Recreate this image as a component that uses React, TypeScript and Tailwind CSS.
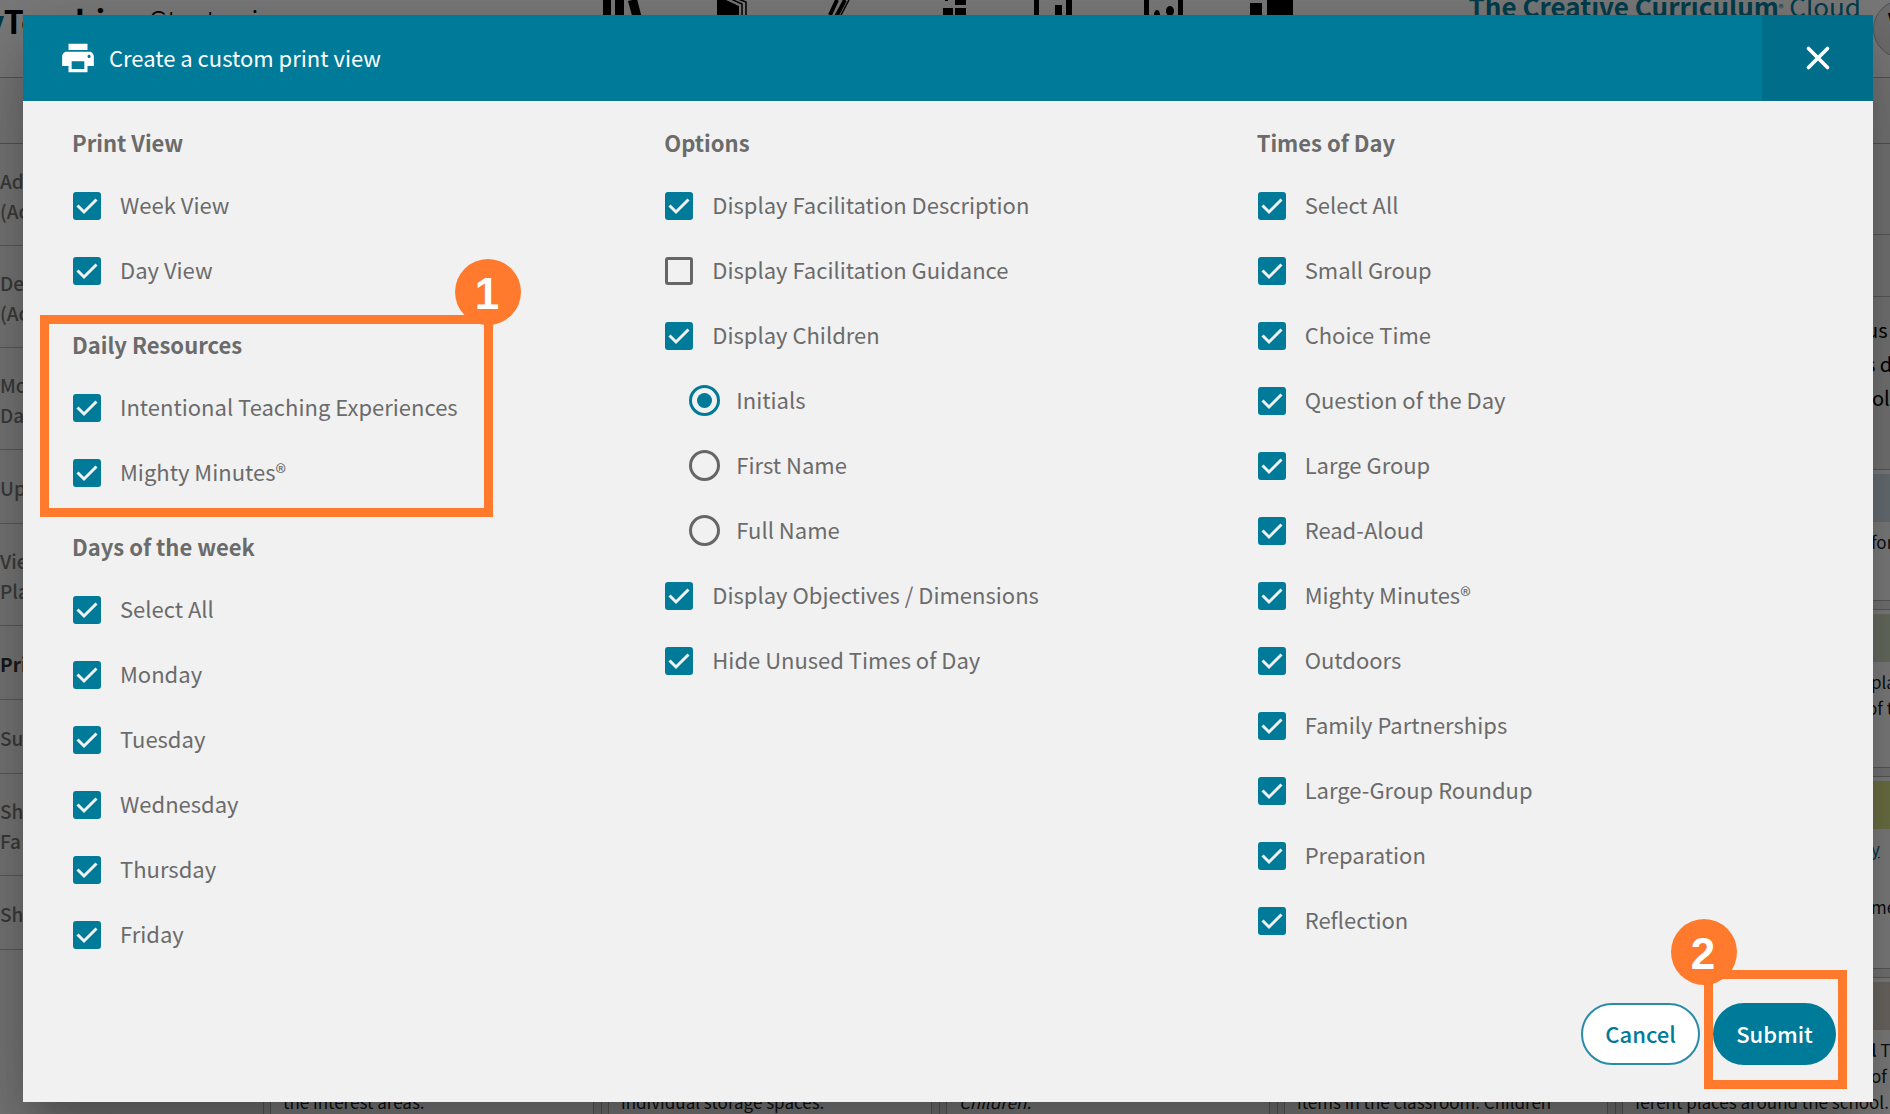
import { useState, type ReactNode } from 'react'
import { MdPrint } from 'react-icons/md'
import { X } from 'lucide-react'

const sidebarItems = [
  { lines: ['Ad', '(Ac'] },
  { lines: ['De', '(Ac'] },
  { lines: ['Mo', 'Da'] },
  { lines: ['Up'] },
  { lines: ['Vie', 'Pla'] },
  { lines: ['Pri'], active: true },
  { lines: ['Su'] },
  { lines: ['Sh', 'Fa'] },
  { lines: ['Sh'] },
]

const days = ['Select All', 'Monday', 'Tuesday', 'Wednesday', 'Thursday', 'Friday']

const times = [
  'Select All',
  'Small Group',
  'Choice Time',
  'Question of the Day',
  'Large Group',
  'Read-Aloud',
  'Mighty Minutes®',
  'Outdoors',
  'Family Partnerships',
  'Large-Group Roundup',
  'Preparation',
  'Reflection',
]

const weekNotes = ['the interest areas.', 'individual storage spaces.', 'Children.', 'items in the classroom. Children']

function Check({ label, defaultChecked = true }: { label: string; defaultChecked?: boolean }) {
  return (
    <label className="flex h-[65px] items-center gap-[19px] pl-px">
      <span className="relative block size-7">
        <input
          type="checkbox"
          defaultChecked={defaultChecked}
          className="peer block size-7 appearance-none rounded-[3px] border-[3px] border-[#666666] checked:border-[#007a99] checked:bg-[#007a99]"
        />
        <svg viewBox="0 0 28 28" className="pointer-events-none absolute inset-0 hidden size-7 peer-checked:block" fill="none">
          <path d="M4.500 13.500 11 20 23.500 7.500" stroke="#f1f1f1" strokeWidth="3" />
        </svg>
      </span>
      <span className="pb-[3px] whitespace-nowrap">{label}</span>
    </label>
  )
}

function Radio({ label, checked, onChange }: { label: string; checked: boolean; onChange: () => void }) {
  return (
    <label className="flex h-[65px] items-center gap-4 pl-[25px]">
      <span className="relative flex size-[31px] items-center justify-center">
        <input
          type="radio"
          name="child-name"
          checked={checked}
          onChange={onChange}
          className="peer block size-[31px] appearance-none rounded-full border-[3px] border-[#666666] checked:border-[#007a99]"
        />
        <span className="pointer-events-none absolute hidden size-[15px] rounded-full bg-[#007a99] peer-checked:block" />
      </span>
      <span className="pb-[3px] whitespace-nowrap">{label}</span>
    </label>
  )
}

function Section({ title, children }: { title: string; children: ReactNode }) {
  return (
    <section className="relative pb-px">
      <h2 className="h-[71px] pt-7 leading-6 font-bold">{title}</h2>
      {children}
    </section>
  )
}

function Badge({ n, className }: { n: number; className: string }) {
  return (
    <span
      className={`absolute flex size-[66px] items-center justify-center rounded-full bg-[#ff7a2c] pt-1 pr-0.5 font-['Liberation_Sans',sans-serif] text-[44px] leading-none font-bold text-white ${className}`}
    >
      {n}
    </span>
  )
}

function NavIcon({ children }: { children: ReactNode }) {
  return (
    <svg viewBox="0 0 40 30" className="h-[30px] w-10 overflow-visible" fill="black">
      {children}
    </svg>
  )
}

function NavIcons() {
  return (
    <nav className="flex gap-[68px]">
      <NavIcon>
        <path d="M1 0h8v30H1zM13 0h9v30h-9zM26 1l9-2 8 31h-9z" />
      </NavIcon>
      <NavIcon>
        <path d="M7 0h9l13 6v24H7z" />
        <path d="M21 -1l11 5v26M28 -1l8 3v28" fill="none" stroke="black" strokeWidth="1.5" />
      </NavIcon>
      <NavIcon>
        <path d="M19 0 12 15M27 0 18 17" stroke="black" strokeWidth="4" />
        <path d="M31 0 22 17" stroke="black" strokeWidth="1.5" />
      </NavIcon>
      <NavIcon>
        <path d="M29 0h11v5H29zM17 8h10v22H17zM29 8h11v22H29zM19 0h3v1h-3z" />
      </NavIcon>
      <NavIcon>
        <path d="M0 0h5v30H0zM11 18h6v12h-6zM21 5h7v25h-7zM32 0h6v30h-6z" />
      </NavIcon>
      <NavIcon>
        <path d="M2 0h5v30H2zM36 0h5v30h-5z" />
        <ellipse cx="15" cy="15" rx="3" ry="5" />
        <ellipse cx="28" cy="11" rx="4" ry="5" />
        <path d="M23 20h10v4H23z" />
      </NavIcon>
      <NavIcon>
        <path d="M0 3h12v27H0zM17 0h26v18h-6l-2 4h-4l-2-4H17z" />
      </NavIcon>
    </nav>
  )
}

function Card({ className, bar, children }: { className: string; bar: string; children?: ReactNode }) {
  return (
    <div className={`border border-[#b5b5b5] bg-white p-1 ${className}`}>
      <div className={`mb-[7px] h-12 ${bar}`} />
      {children}
    </div>
  )
}

function WeekPlan() {
  return (
    <div className="flex w-[1690px] shrink-0 flex-col text-[17px] leading-[26px] whitespace-pre text-[#222222]">
      <div className="h-[91px] border-b border-[#b5b5b5]" />
      <div className="h-[62px] border-b border-[#b5b5b5]" />
      <div className="h-[172px] pt-4 pl-[1603px] text-[20px] leading-[34px] text-black">
        <p>us</p>
        <p>s d</p>
        <p className="pl-1.5">ol</p>
      </div>
      <div className="grid grid-cols-5">
        {weekNotes.map((note) => (
          <div key={note} className="flex flex-col gap-2 border-l border-[#b5b5b5] pr-[7px] pl-1.5">
            <Card className="h-[132px]" bar="bg-[#d5e3ec]" />
            <Card className="h-[159px]" bar="bg-[#d5dfc6]" />
            <Card className="h-[193px]" bar="bg-[#dfe68a]" />
            <Card className="h-[150px]" bar="bg-[#ddd2c8]">
              <p className={`pt-[52px] pl-2 ${note === 'Children.' ? 'italic' : ''}`}>{note}</p>
            </Card>
          </div>
        ))}
        <div className="flex flex-col gap-2 border-l border-[#b5b5b5] pr-[7px] pl-1.5">
          <Card className="h-[132px]" bar="bg-[#d5e3ec]">
            <p className="pl-[244px]">for</p>
          </Card>
          <Card className="h-[159px]" bar="bg-[#d5dfc6]">
            <p className="pl-[244px]">pla</p>
            <p className="pl-60">of t</p>
          </Card>
          <Card className="h-[193px]" bar="bg-[#dfe68a]">
            <a href="#plan" className="ml-[244px] block text-[#007a99] underline">
              y
            </a>
            <p className="pt-8 pl-[244px]">me</p>
          </Card>
          <Card className="h-[150px]" bar="bg-[#ddd2c8]">
            <p className="pl-[244px]">
              <b>l</b> T
            </p>
            <p className="pl-[244px]">of</p>
            <p className="pl-2">ferent places around the school.</p>
          </Card>
        </div>
      </div>
    </div>
  )
}

function PlannerPage() {
  return (
    <div className="absolute inset-0 overflow-hidden bg-[#ececec]" aria-hidden="true">
      <header className="flex h-[78px] justify-between border-b border-[#a8a8a8] bg-[#f4f4f4]">
        <div className="w-[602px] text-[32px] leading-10 whitespace-nowrap text-black">
          <span className="-ml-3.5 font-bold text-[#007a99]">y</span>
          <span className="font-bold">Teaching</span>
          <span className="pl-1 font-light">Strategies</span>
          <sup className="text-[10px]">™</sup>
        </div>
        <NavIcons />
        <div className="flex flex-1 justify-end">
          <div className="-mt-2.5 mr-3 text-[26px] leading-8 whitespace-nowrap text-[#007a99]">
            <span className="font-bold">The Creative Curriculum</span>
            <sup className="text-[10px]">®</sup> Cloud
          </div>
          <div className="-mr-[41px] h-[58px] w-[58px] rounded-full border border-[#a8a8a8] bg-[#dddddd] pt-1 pl-3.5 text-[20px] font-bold">
            V
          </div>
        </div>
      </header>
      <div className="h-[66px] border-b border-[#a8a8a8]" />
      <div className="flex">
        <ul className="w-[263px] shrink-0 text-[19px] leading-[30px] font-medium text-[#777777]">
          {sidebarItems.map((item, i) => (
            <li
              key={i}
              className={`flex flex-col justify-center border-b border-[#b5b5b5] pt-0.5 ${item.lines.length > 1 ? 'h-[102px]' : 'h-[74px]'} ${item.active ? 'font-bold text-[#333333]' : ''}`}
            >
              {item.lines.map((line) => (
                <span key={line}>{line}</span>
              ))}
            </li>
          ))}
        </ul>
        <WeekPlan />
      </div>
    </div>
  )
}

export default function App() {
  const [nameMode, setNameMode] = useState('Initials')

  return (
    <div className="relative min-h-screen overflow-hidden font-['Noto_Sans_CJK_SC','Noto_Sans',sans-serif]">
      <PlannerPage />
      <div className="relative min-h-screen bg-black/50 pt-[15px] pr-[17px] pb-3 pl-[23px]">
        <div
          role="dialog"
          aria-labelledby="dialog-title"
          className="bg-[#f1f1f1] text-[22px] leading-8 text-[#6b6b6b] shadow-[0_22px_30px_-14px_rgba(0,0,0,0.2),0_48px_76px_6px_rgba(0,0,0,0.14),0_18px_92px_16px_rgba(0,0,0,0.12)]"
        >
          <header className="flex h-[87px] items-stretch justify-between border-b border-white bg-[#007a99] text-white">
            <div className="flex items-center gap-3 pl-9">
              <MdPrint size={38} />
              <h1 id="dialog-title" className="pb-[3px]">
                Create a custom print view
              </h1>
            </div>
            <button type="button" aria-label="Close" className="flex w-[111px] items-center justify-center bg-[#006e8a]">
              <X size={38} strokeWidth={2.3} />
            </button>
          </header>

          <div className="grid grid-cols-3 pr-6 pl-[49px]">
            <div>
              <Section title="Print View">
                <Check label="Week View" />
                <Check label="Day View" />
              </Section>
              <Section title="Daily Resources">
                <Check label="Intentional Teaching Experiences" />
                <Check label="Mighty Minutes®" />
                <div className="pointer-events-none absolute top-[11px] -left-8 h-[202px] w-[453px] border-[9px] border-[#ff7a2c]">
                  <Badge n={1} className="-top-[65px] -right-[37px]" />
                </div>
              </Section>
              <Section title="Days of the week">
                {days.map((d) => (
                  <Check key={d} label={d} />
                ))}
              </Section>
            </div>

            <Section title="Options">
              <Check label="Display Facilitation Description" />
              <Check label="Display Facilitation Guidance" defaultChecked={false} />
              <Check label="Display Children" />
              {['Initials', 'First Name', 'Full Name'].map((n) => (
                <Radio key={n} label={n} checked={nameMode === n} onChange={() => setNameMode(n)} />
              ))}
              <Check label="Display Objectives / Dimensions" />
              <Check label="Hide Unused Times of Day" />
            </Section>

            <Section title="Times of Day">
              {times.map((t) => (
                <Check key={t} label={t} />
              ))}
            </Section>
          </div>

          <footer className="flex justify-end gap-[13px] pt-[35px] pr-[37px] pb-[37px] font-medium">
            <button type="button" className="h-[62px] w-[119px] rounded-full border-2 border-[#2a8ba8] bg-white pb-[3px] text-[#007a99]">
              Cancel
            </button>
            <div className="relative">
              <button type="submit" className="h-[62px] w-[123px] rounded-full bg-[#007a99] pb-[3px] text-white">
                Submit
              </button>
              <div className="pointer-events-none absolute -top-[33px] -right-[11px] -bottom-6 -left-[9px] border-[9px] border-[#ff7a2c]">
                <Badge n={2} className="-top-[60px] -left-[42px]" />
              </div>
            </div>
          </footer>
        </div>
      </div>
    </div>
  )
}
